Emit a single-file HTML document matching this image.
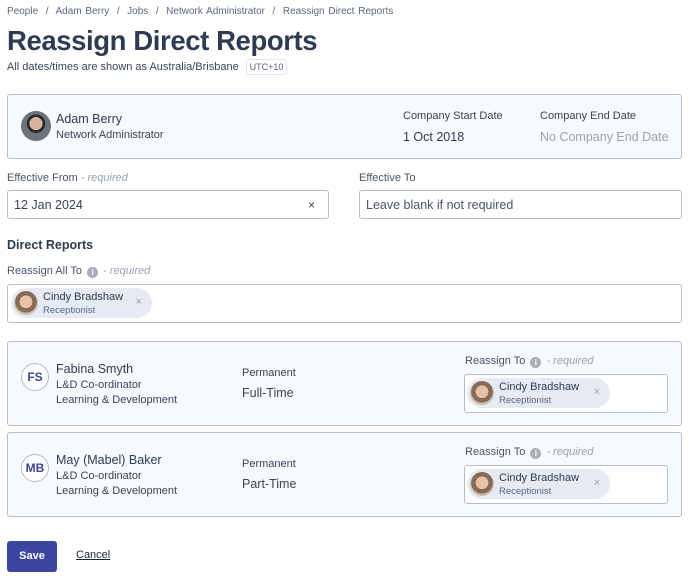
<!DOCTYPE html>
<html><head><meta charset="utf-8"><style>
*{box-sizing:border-box;margin:0;padding:0}
body{width:692px;height:580px;background:#fff;font-family:"Liberation Sans",sans-serif;color:#3a4458;position:relative;overflow:hidden}
.a{position:absolute;white-space:nowrap}
.bc{font-size:10px;color:#5b6780;top:6px;left:7px;word-spacing:1px}
.title{top:25px;left:7px;font-size:27.5px;font-weight:bold;color:#2f3b52;letter-spacing:-0.4px}
.card{position:absolute;background:#f6f9fd;border:1px solid #b5bdc9;border-radius:3px}
.inp{position:absolute;background:#fff;border:1px solid #b5bdc9;border-radius:3px}
.lbl{font-size:11px;color:#4a5468}
.req{font-style:italic;color:#9aa3b2}
.info{display:inline-block;width:11px;height:11px;border-radius:50%;background:#a7afbd;color:#fff;font-size:8px;text-align:center;line-height:11px;font-weight:bold;vertical-align:-1px;margin:0 2px}
.chip{position:absolute;background:#e6ebf3;border-radius:15px;height:30px}
.chip .av{position:absolute;left:3px;top:3px;width:24px;height:24px;border-radius:50%;background:radial-gradient(circle at 50% 45%,#e7c2a8 0 35%,#8a6a55 36% 60%,#c9bfb6 61%)}
.chip .n{position:absolute;left:32px;top:3px;font-size:11px;color:#2f3b52}
.chip .r{position:absolute;left:32px;top:17px;font-size:9.5px;color:#5b6780}
.chip .x{position:absolute;right:10px;top:8px;font-size:11px;color:#9aa3b2}
.ini{position:absolute;width:28px;height:28px;border-radius:50%;border:1px solid #b5bdc9;background:#fff;font-size:12px;font-weight:bold;color:#3c4590;text-align:center;line-height:26px}
</style></head><body>
<div class="a bc">People &nbsp;/&nbsp; Adam Berry &nbsp;/&nbsp; Jobs &nbsp;/&nbsp; Network Administrator &nbsp;/&nbsp; Reassign Direct Reports</div>
<div class="a title">Reassign Direct Reports</div>
<div class="a" style="top:61px;left:7px;font-size:11px;color:#3a4458">All dates/times are shown as Australia/Brisbane</div>
<div class="a" style="top:59px;left:246px;width:41px;height:16px;border:1px solid #e3e6ec;border-radius:3px;font-size:9px;color:#6a5a70;text-align:center;line-height:14px">UTC+10</div>

<div class="card" style="left:7px;top:94px;width:675px;height:65px">
 <div class="a" style="left:13px;top:16px;width:30px;height:30px;border-radius:50%;background:radial-gradient(circle at 50% 42%,#d8b49c 0 28%,#2c2c2e 29% 40%,#6d7480 41%);"></div>
 <div class="a" style="left:48px;top:17px;font-size:12.5px;color:#2f3b52">Adam Berry</div>
 <div class="a" style="left:48px;top:34px;font-size:11px">Network Administrator</div>
 <div class="a" style="left:395px;top:15px;font-size:11px">Company Start Date</div>
 <div class="a" style="left:395px;top:35px;font-size:12.5px;color:#2f3b52">1 Oct 2018</div>
 <div class="a" style="left:532px;top:15px;font-size:11px">Company End Date</div>
 <div class="a" style="left:532px;top:35px;font-size:12.5px;color:#9aa3b2">No Company End Date</div>
</div>

<div class="a lbl" style="left:7px;top:172px">Effective From <span class="req">- required</span></div>
<div class="inp" style="left:7px;top:190px;width:322px;height:29px"><span class="a" style="left:6px;top:7px;font-size:12.5px">12 Jan 2024</span><span class="a" style="right:13px;top:7px;font-size:12px">×</span></div>
<div class="a lbl" style="left:359px;top:172px">Effective To</div>
<div class="inp" style="left:359px;top:190px;width:323px;height:29px"><span class="a" style="left:6px;top:7px;font-size:12.5px;color:#4a5468">Leave blank if not required</span></div>

<div class="a" style="left:7px;top:238px;font-size:12.5px;font-weight:bold;color:#2f3b52">Direct Reports</div>
<div class="a lbl" style="left:7px;top:265px">Reassign All To <span class="info">i</span> <span class="req">- required</span></div>
<div class="inp" style="left:7px;top:284px;width:675px;height:39px"></div>
<div class="chip" style="left:11px;top:288px;width:141px"><div class="av"></div><div class="n">Cindy Bradshaw</div><div class="r">Receptionist</div><div class="x">×</div></div>

<div class="card" style="left:7px;top:341px;width:675px;height:85px">
 <div class="ini" style="left:13px;top:21px">FS</div>
 <div class="a" style="left:48px;top:20px;font-size:12.5px;color:#2f3b52">Fabina Smyth</div>
 <div class="a" style="left:48px;top:37px;font-size:11px">L&amp;D Co-ordinator</div>
 <div class="a" style="left:48px;top:52px;font-size:11px">Learning &amp; Development</div>
 <div class="a" style="left:234px;top:25px;font-size:11px">Permanent</div>
 <div class="a" style="left:234px;top:44px;font-size:12.5px">Full-Time</div>
 <div class="a lbl" style="left:457px;top:13px">Reassign To <span class="info">i</span> <span class="req">- required</span></div>
 <div class="inp" style="left:456px;top:32px;width:204px;height:39px"></div>
 <div class="chip" style="left:459px;top:36px;width:143px"><div class="av"></div><div class="n">Cindy Bradshaw</div><div class="r">Receptionist</div><div class="x">×</div></div>
</div>

<div class="card" style="left:7px;top:432px;width:675px;height:85px">
 <div class="ini" style="left:13px;top:21px">MB</div>
 <div class="a" style="left:48px;top:20px;font-size:12.5px;color:#2f3b52">May (Mabel) Baker</div>
 <div class="a" style="left:48px;top:37px;font-size:11px">L&amp;D Co-ordinator</div>
 <div class="a" style="left:48px;top:52px;font-size:11px">Learning &amp; Development</div>
 <div class="a" style="left:234px;top:25px;font-size:11px">Permanent</div>
 <div class="a" style="left:234px;top:44px;font-size:12.5px">Part-Time</div>
 <div class="a lbl" style="left:457px;top:13px">Reassign To <span class="info">i</span> <span class="req">- required</span></div>
 <div class="inp" style="left:456px;top:32px;width:204px;height:39px"></div>
 <div class="chip" style="left:459px;top:36px;width:143px"><div class="av"></div><div class="n">Cindy Bradshaw</div><div class="r">Receptionist</div><div class="x">×</div></div>
</div>

<div class="a" style="left:7px;top:541px;width:50px;height:31px;background:#3c45a0;border-radius:3px;color:#fff;font-size:11px;font-weight:bold;text-align:center;line-height:31px">Save</div>
<div class="a" style="left:76px;top:549px;font-size:11px;color:#1f2433;text-decoration:underline">Cancel</div>
</body></html>
